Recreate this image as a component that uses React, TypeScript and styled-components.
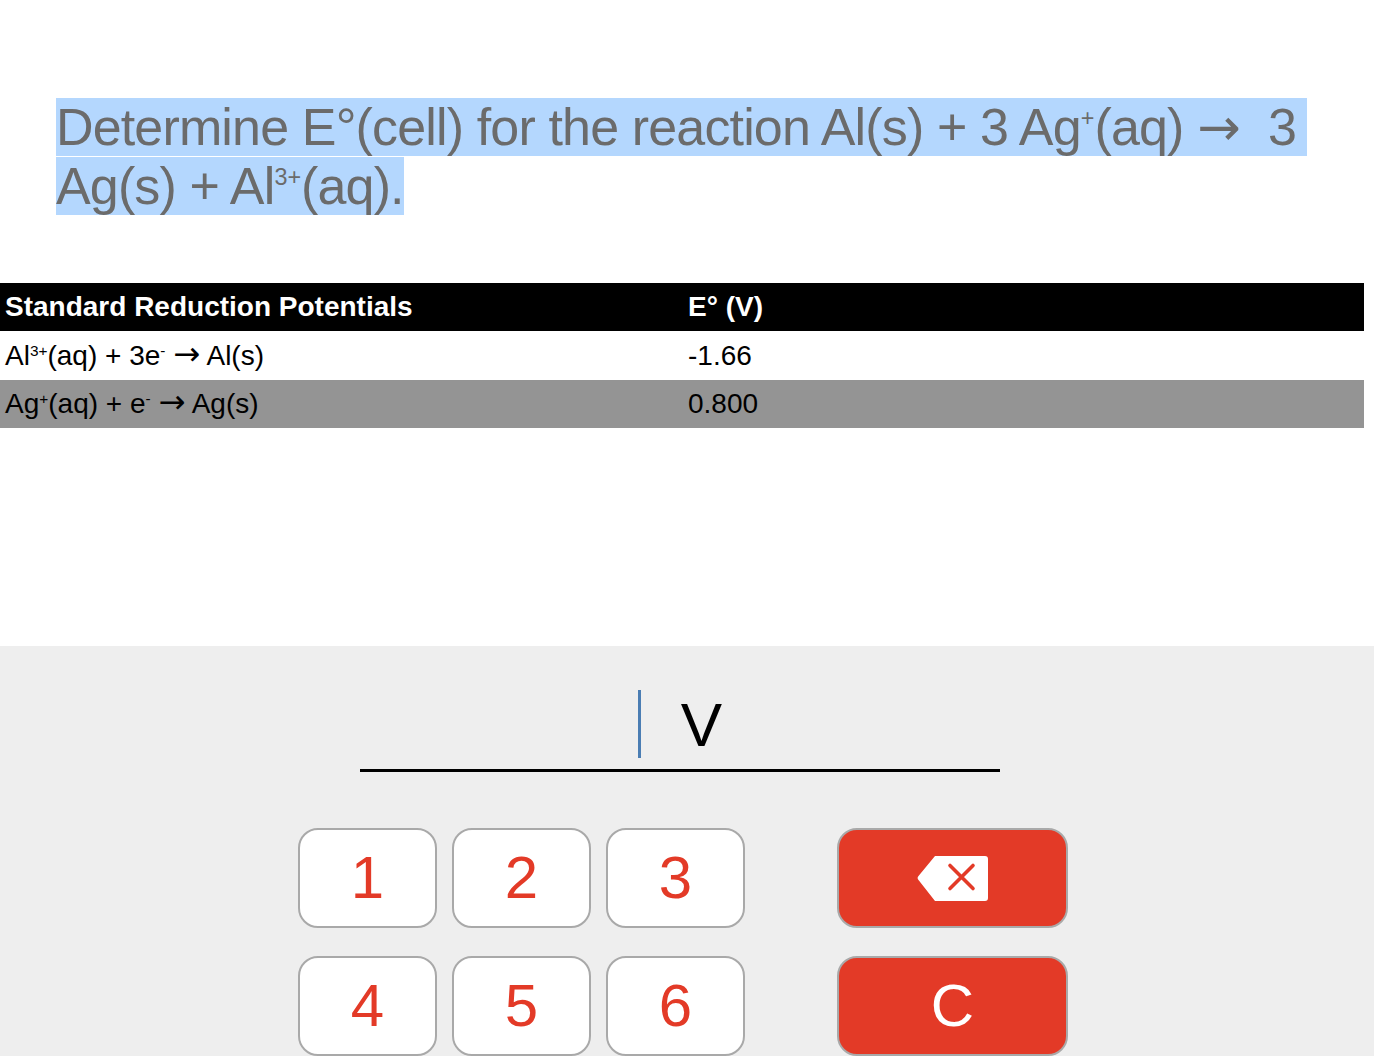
import React from "react";
import styled, { createGlobalStyle } from "styled-components";

const GlobalStyle = createGlobalStyle`
  html, body { margin: 0; padding: 0; background: #ffffff; }
  body { font-family: "Liberation Sans", Arial, sans-serif; }
  * { box-sizing: border-box; }
`;

const Page = styled.div`
  display: flex;
  flex-direction: column;
  width: 1374px;
  min-height: 1056px;
  overflow: hidden;
`;

const QuestionBlock = styled.div`
  padding: 98px 30px 0 56px;
  height: 283px;
`;

const Question = styled.p`
  margin: 0;
  font-size: 52px;
  line-height: 59px;
  color: #6b6b6b;
  letter-spacing: -0.85px;
`;

const Highlight = styled.span`
  background: #b4d7fe;
  white-space: pre-wrap;
`;

const Sup = styled.sup<{ $size?: number; $lift?: number }>`
  font-size: ${(p) => p.$size ?? 0.45}em;
  line-height: 0;
  vertical-align: ${(p) => p.$lift ?? 0.8}em;
  letter-spacing: 0;
`;

const Arrow = styled.span<{ $size?: number }>`
  font-family: "DejaVu Sans", sans-serif;
  font-size: ${(p) => p.$size ?? 1}em;
  line-height: 0;
  letter-spacing: 0;
`;

const Table = styled.div`
  display: flex;
  flex-direction: column;
  width: 1364px;
`;

const Row = styled.div<{ $bg: string; $color: string; $bold?: boolean; $h: number }>`
  display: grid;
  grid-template-columns: 688px 1fr;
  align-items: center;
  height: ${(p) => p.$h}px;
  background: ${(p) => p.$bg};
  color: ${(p) => p.$color};
  font-weight: ${(p) => (p.$bold ? 700 : 400)};
  font-size: 28px;
  line-height: 32px;
`;

const Cell = styled.div<{ $pad?: number }>`
  padding-left: ${(p) => p.$pad ?? 0}px;
  white-space: nowrap;
`;

const Spacer = styled.div`
  height: 218px;
`;

const Keypad = styled.div`
  flex: 1;
  background: #eeeeee;
  display: flex;
  flex-direction: column;
  align-items: center;
  padding: 44px 14px 0 0;
  min-height: 410px;
`;

const InputField = styled.div`
  width: 640px;
  height: 82px;
  border-bottom: 3px solid #000;
  display: flex;
  justify-content: center;
  align-items: flex-start;
  gap: 40px;
`;

const Caret = styled.div`
  width: 3px;
  height: 68px;
  background: #4a7db3;
`;

const Unit = styled.span`
  font-family: "Liberation Sans", Arial, sans-serif;
  font-size: 62px;
  line-height: 68px;
  color: #000;
  padding-top: 1px;
`;

const KeyGrid = styled.div`
  margin-top: 56px;
  margin-left: 6px;
  display: grid;
  grid-template-columns: 139px 139px 139px 62px 231px;
  grid-auto-rows: 100px;
  column-gap: 15px;
  row-gap: 28px;
`;

const Key = styled.button<{ $danger?: boolean; $col?: number }>`
  grid-column: ${(p) => p.$col ?? "auto"};
  margin: 0;
  padding: 0;
  border: 2px solid #a9a9a9;
  border-radius: 20px;
  background: ${(p) => (p.$danger ? "#e33a27" : "#ffffff")};
  color: ${(p) => (p.$danger ? "#ffffff" : "#e33a27")};
  font-family: "Liberation Sans", Arial, sans-serif;
  font-size: 60px;
  line-height: 1;
  display: flex;
  align-items: center;
  justify-content: center;
  cursor: pointer;
`;

const BackspaceIcon = () => (
  <svg width="72" height="47" viewBox="0 0 72 47">
    <path
      d="M18 1 H68 a3 3 0 0 1 3 3 V43 a3 3 0 0 1 -3 3 H18 L1.5 25 a3 3 0 0 1 0 -4 Z"
      fill="#ffffff"
    />
    <path
      d="M33 10.5 L56 33.5 M56 10.5 L33 33.5"
      stroke="#e33a27"
      strokeWidth="3.6"
      strokeLinecap="round"
    />
  </svg>
);

export default function App() {
  return (
    <>
      <GlobalStyle />
      <Page>
        <QuestionBlock>
          <Question>
            <Highlight>
              Determine E°(cell) for the reaction Al(s) + 3 Ag<Sup>+</Sup>(aq) <Arrow>→</Arrow>  3 Ag(s) + Al
              <Sup>3+</Sup>(aq).
            </Highlight>
          </Question>
        </QuestionBlock>
        <Table>
          <Row $bg="#000000" $color="#ffffff" $bold $h={48}>
            <Cell $pad={5}>Standard Reduction Potentials</Cell>
            <Cell>E° (V)</Cell>
          </Row>
          <Row $bg="#ffffff" $color="#000000" $h={49}>
            <Cell $pad={5}>
              Al<Sup $size={0.55} $lift={0.6}>3+</Sup>(aq) + 3e<Sup $size={0.55} $lift={0.6}>-</Sup>{" "}
              <Arrow $size={1.15}>→</Arrow> Al(s)
            </Cell>
            <Cell>-1.66</Cell>
          </Row>
          <Row $bg="#949494" $color="#000000" $h={48}>
            <Cell $pad={5}>
              Ag<Sup $size={0.55} $lift={0.6}>+</Sup>(aq) + e<Sup $size={0.55} $lift={0.6}>-</Sup>{" "}
              <Arrow $size={1.15}>→</Arrow> Ag(s)
            </Cell>
            <Cell>0.800</Cell>
          </Row>
        </Table>
        <Spacer />
        <Keypad>
          <InputField>
            <Caret />
            <Unit>V</Unit>
          </InputField>
          <KeyGrid>
            <Key>1</Key>
            <Key>2</Key>
            <Key>3</Key>
            <Key $danger $col={5} aria-label="backspace">
              <BackspaceIcon />
            </Key>
            <Key>4</Key>
            <Key>5</Key>
            <Key>6</Key>
            <Key $danger $col={5}>C</Key>
          </KeyGrid>
        </Keypad>
      </Page>
    </>
  );
}
